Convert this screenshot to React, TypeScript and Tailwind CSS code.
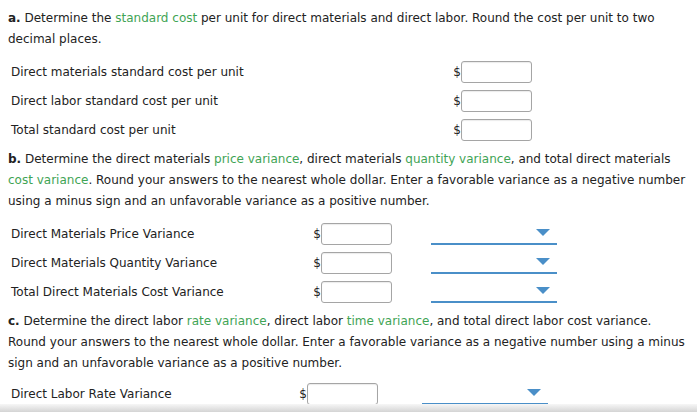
import React from "react"

const font = { fontFamily: '"DejaVu Sans", Verdana, sans-serif' }

function Money({ labelW }: { labelW: string }) {
  return (
    <>
      <span className="w-[9px] text-right text-[12px] text-[#222]">$</span>
      <div className="w-[71px] h-[22px] rounded-[3px] border border-[#a5a5a5] bg-white shadow-[inset_0_1px_1px_rgba(0,0,0,0.08)]" />
    </>
  )
}

function Dropdown({ ml }: { ml: string }) {
  return (
    <div className={`${ml} w-[126px] h-[23px] border-b-2 border-[#4a8fc8] flex items-center justify-end pr-[7px]`}>
      <svg width="14" height="7" viewBox="0 0 14 7">
        <polygon points="0,0 14,0 7,7" fill="#4a8fc8" />
      </svg>
    </div>
  )
}

function G({ children }: { children: React.ReactNode }) {
  return <span className="text-[#3fa455]">{children}</span>
}

export default function App() {
  return (
    <div style={font} className="relative w-[697px] h-[418px] overflow-hidden bg-white text-[#222] text-[12px]">
      <div className="pl-[8px] pr-[6px] pt-[8px]">
        {/* Part a */}
        <p className="leading-[21px]">
          <b>a.</b> Determine the <G>standard cost</G> per unit for direct materials and direct labor. Round the cost per unit to two decimal places.
        </p>
        <div className="mt-[7px] pl-[3px]">
          {["Direct materials standard cost per unit", "Direct labor standard cost per unit", "Total standard cost per unit"].map((l) => (
            <div key={l} className="flex items-center h-[29px]">
              <div className="w-[441px]">{l}</div>
              <Money labelW="" />
            </div>
          ))}
        </div>

        {/* Part b */}
        <p className="mt-[5px] leading-[21px]">
          <b>b.</b> Determine the direct materials <G>price variance</G>, direct materials <G>quantity variance</G>, and total direct materials{" "}
          <G>cost variance</G>. Round your answers to the nearest whole dollar. Enter a favorable variance as a negative number using a minus sign and an unfavorable variance as a positive number.
        </p>
        <div className="mt-[7px] pl-[3px]">
          {["Direct Materials Price Variance", "Direct Materials Quantity Variance", "Total Direct Materials Cost Variance"].map((l) => (
            <div key={l} className="flex items-center h-[29px]">
              <div className="w-[301px]">{l}</div>
              <Money labelW="" />
              <Dropdown ml="ml-[39px]" />
            </div>
          ))}
        </div>

        {/* Part c */}
        <p className="mt-[5px] leading-[21px]">
          <b>c.</b> Determine the direct labor <G>rate variance</G>, direct labor <G>time variance</G>, and total direct labor cost variance. Round your answers to the nearest whole dollar. Enter a favorable variance as a negative number using a minus sign and an unfavorable variance as a positive number.
        </p>
        <div className="mt-[5px] pl-[3px]">
          <div className="flex items-center h-[29px]">
            <div className="w-[287px]">Direct Labor Rate Variance</div>
            <Money labelW="" />
            <Dropdown ml="ml-[44px]" />
          </div>
        </div>
      </div>
      <div className="absolute left-0 right-0 top-[404px] h-[8px] bg-gradient-to-b from-[#f7f7f7] to-[#d4d4d4]" />
    </div>
  )
}
